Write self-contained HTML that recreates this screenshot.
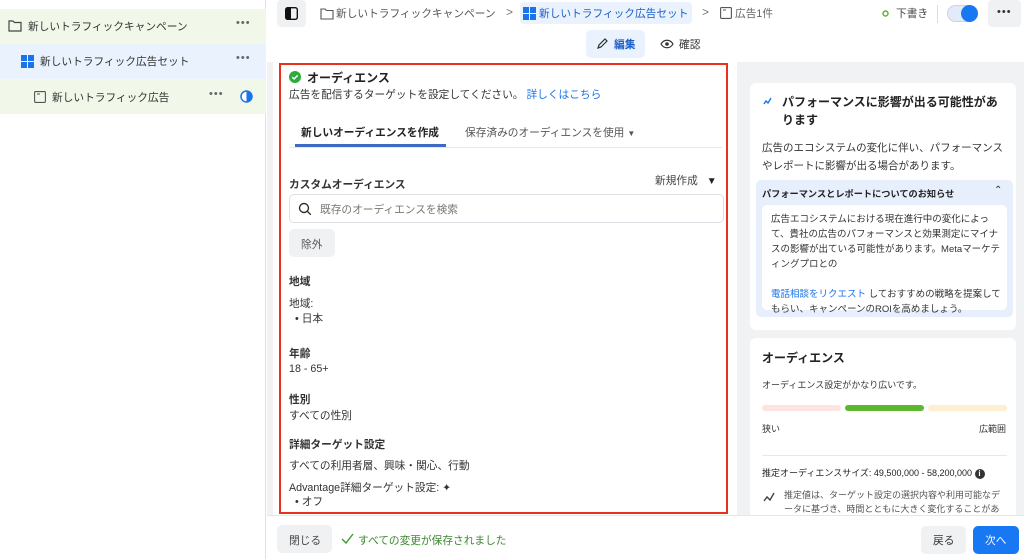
<!DOCTYPE html>
<html><head><meta charset="utf-8"><style>
*{box-sizing:border-box;margin:0;padding:0}
body{width:1024px;height:559px;overflow:hidden;position:relative;background:#fff;font-family:"Liberation Sans","Noto Sans CJK JP",sans-serif;color:#1c2b33;font-size:10.7px}
.a{position:absolute;white-space:nowrap}
.side{left:0;top:0;width:266px;height:559px;background:#fff;border-right:1px solid #dde1e5}
.row{left:0;width:266px;height:35px;color:#333}
.dots{color:#666;font-size:11px;letter-spacing:1px}
.gray{left:267px;top:62px;width:757px;height:453px;background:#f1f2f4}
.panel{left:273px;top:62px;width:464px;height:453px;background:#fff}
.red{left:279px;top:63px;width:449px;height:451px;border:2px solid #e8321e}
.card{background:#fff;border-radius:6px}
.b{font-weight:bold}
</style></head><body>
<div class="a side"></div>
<div class="a row" style="top:9px;background:#f1f8e9"></div>
<div class="a row" style="top:44px;background:#eaf2fd"></div>
<div class="a row" style="top:79px;background:#f1f8e9"></div>
<svg class="a" style="left:8px;top:19px" width="14" height="13" viewBox="0 0 14 13"><path d="M1 2h4l1.5 1.5H13V12H1z" fill="none" stroke="#444" stroke-width="1.2"/></svg>
<div class="a" style="left:28px;top:19px;color:#333">新しいトラフィックキャンペーン</div>
<div class="a dots" style="left:236px;top:17px">•••</div>
<svg class="a" style="left:21px;top:55px" width="13" height="13"><rect x="0" y="0" width="6" height="6" fill="#1a73e8"/><rect x="7" y="0" width="6" height="6" fill="#1a73e8"/><rect x="0" y="7" width="6" height="6" fill="#1a73e8"/><rect x="7" y="7" width="6" height="6" fill="#1a73e8"/></svg>
<div class="a" style="left:40px;top:54px;color:#333">新しいトラフィック広告セット</div>
<div class="a dots" style="left:236px;top:52px">•••</div>
<svg class="a" style="left:34px;top:91px" width="12" height="12"><rect x=".6" y=".6" width="10.8" height="10.8" rx="1" fill="none" stroke="#555" stroke-width="1.1"/><path d="M3 3h3" stroke="#555"/></svg>
<div class="a" style="left:52px;top:90px;color:#333">新しいトラフィック広告</div>
<div class="a dots" style="left:209px;top:88px">•••</div>
<svg class="a" style="left:240px;top:90px" width="13" height="13"><circle cx="6.5" cy="6.5" r="5.5" fill="#fff" stroke="#1a73e8" stroke-width="1.5"/><path d="M6.5 1a5.5 5.5 0 0 1 0 11z" fill="#1a73e8"/></svg>

<!-- header -->
<div class="a" style="left:277px;top:0;width:29px;height:27px;background:#f0f1f3;border-radius:4px"></div>
<svg class="a" style="left:285px;top:7px" width="13" height="13"><rect x=".7" y=".7" width="11.6" height="11.6" rx="2" fill="none" stroke="#111" stroke-width="1.4"/><rect x="1" y="1" width="5" height="11" fill="#111"/></svg>
<svg class="a" style="left:320px;top:7px" width="14" height="13"><path d="M1 2h4l1.5 1.5H13V12H1z" fill="none" stroke="#555" stroke-width="1.1"/></svg>
<div class="a" style="left:336px;top:6px;color:#555">新しいトラフィックキャンペーン</div>
<div class="a" style="left:506px;top:5px;color:#777;font-size:12px">&gt;</div>
<div class="a" style="left:520px;top:2px;width:172px;height:22px;background:#eaf2fd;border-radius:4px"></div>
<svg class="a" style="left:523px;top:7px" width="13" height="13"><rect x="0" y="0" width="6" height="6" fill="#1a73e8"/><rect x="7" y="0" width="6" height="6" fill="#1a73e8"/><rect x="0" y="7" width="6" height="6" fill="#1a73e8"/><rect x="7" y="7" width="6" height="6" fill="#1a73e8"/></svg>
<div class="a" style="left:539px;top:6px;color:#1a5fc7">新しいトラフィック広告セット</div>
<div class="a" style="left:702px;top:5px;color:#777;font-size:12px">&gt;</div>
<svg class="a" style="left:720px;top:7px" width="12" height="12"><rect x=".6" y=".6" width="10.8" height="10.8" rx="1" fill="none" stroke="#555" stroke-width="1.1"/><path d="M3 3h3" stroke="#555"/></svg>
<div class="a" style="left:735px;top:6px;color:#666">広告1件</div>
<svg class="a" style="left:882px;top:10px" width="7" height="7"><circle cx="3.5" cy="3.5" r="2.5" fill="none" stroke="#5cb82c" stroke-width="1.5"/></svg>
<div class="a" style="left:896px;top:6px;color:#444">下書き</div>
<div class="a" style="left:937px;top:5px;width:1px;height:18px;background:#ddd"></div>
<div class="a" style="left:947px;top:5px;width:30px;height:17px;border-radius:9px;background:#e3ebf8;border:1px solid #c8d3e6"></div>
<div class="a" style="left:961px;top:5px;width:17px;height:17px;border-radius:50%;background:#1877f2"></div>
<div class="a" style="left:988px;top:0;width:33px;height:27px;background:#f0f1f3;border-radius:4px"></div>
<div class="a dots" style="left:997px;top:6px;color:#333">•••</div>
<div class="a" style="left:586px;top:30px;width:59px;height:28px;background:#eaf2fd;border-radius:5px"></div>
<svg class="a" style="left:596px;top:37px" width="13" height="13"><path d="M2 11l1-3 6-6 2 2-6 6z" fill="none" stroke="#333" stroke-width="1.2"/></svg>
<div class="a b" style="left:614px;top:37px;color:#1a5fc7">編集</div>
<svg class="a" style="left:660px;top:39px" width="14" height="10"><path d="M1 5c3-5 9-5 12 0c-3 5-9 5-12 0z" fill="none" stroke="#333" stroke-width="1.2"/><circle cx="7" cy="5" r="1.8" fill="#333"/></svg>
<div class="a" style="left:679px;top:37px;color:#333">確認</div>

<div class="a gray"></div>
<div class="a panel"></div>
<div class="a red"></div>
<svg class="a" style="left:289px;top:71px" width="12" height="12"><circle cx="6" cy="6" r="6" fill="#2eaa3f"/><path d="M3.3 6.2l1.8 1.8 3.6-3.6" stroke="#fff" stroke-width="1.5" fill="none"/></svg>
<div class="a b" style="left:307px;top:69px;font-size:12px;color:#222">オーディエンス</div>
<div class="a" style="left:289px;top:87px;color:#333">広告を配信するターゲットを設定してください。 <span style="color:#1a73e8">詳しくはこちら</span></div>
<div class="a b" style="left:301px;top:125px;color:#222">新しいオーディエンスを作成</div>
<div class="a" style="left:295px;top:144px;width:151px;height:3px;background:#3d6bc4"></div>
<div class="a" style="left:289px;top:147px;width:433px;height:1px;background:#e6e8eb"></div>
<div class="a" style="left:465px;top:125px;color:#555">保存済みのオーディエンスを使用 <span style="font-size:8px">▼</span></div>
<div class="a b" style="left:289px;top:177px;color:#333">カスタムオーディエンス</div>
<div class="a" style="left:655px;top:173px;color:#444">新規作成 <span style="font-size:10px;margin-left:6px;color:#222">▼</span></div>
<div class="a" style="left:289px;top:194px;width:435px;height:29px;border:1px solid #dcdfe3;border-radius:5px"></div>
<svg class="a" style="left:298px;top:202px" width="14" height="14"><circle cx="6" cy="6" r="4.5" fill="none" stroke="#333" stroke-width="1.4"/><path d="M9.3 9.3l3.5 3.5" stroke="#333" stroke-width="1.4"/></svg>
<div class="a" style="left:320px;top:202px;color:#777">既存のオーディエンスを検索</div>
<div class="a" style="left:289px;top:229px;width:46px;height:28px;background:#f0f1f3;border-radius:5px"></div>
<div class="a" style="left:301px;top:237px;color:#555">除外</div>
<div class="a b" style="left:289px;top:274px;color:#333">地域</div>
<div class="a" style="left:289px;top:296px;color:#333">地域:</div>
<div class="a" style="left:295px;top:311px;color:#333">• 日本</div>
<div class="a b" style="left:289px;top:346px;color:#333">年齢</div>
<div class="a" style="left:289px;top:363px;color:#333">18 - 65+</div>
<div class="a b" style="left:289px;top:392px;color:#333">性別</div>
<div class="a" style="left:289px;top:408px;color:#333">すべての性別</div>
<div class="a b" style="left:289px;top:437px;color:#333">詳細ターゲット設定</div>
<div class="a" style="left:289px;top:458px;color:#333">すべての利用者層、興味・関心、行動</div>
<div class="a" style="left:289px;top:480px;color:#333">Advantage詳細ターゲット設定: ✦</div>
<div class="a" style="left:295px;top:494px;color:#333">• オフ</div>

<!-- right cards -->
<div class="a card" style="left:750px;top:83px;width:266px;height:247px"></div>
<svg class="a" style="left:763px;top:96px" width="10" height="10"><path d="M1 8l2-3 2 2 3-5" fill="none" stroke="#1a73e8" stroke-width="1.4"/></svg>
<div class="a b" style="left:782px;top:93px;font-size:12px;line-height:18px;color:#222;white-space:normal;width:226px">パフォーマンスに影響が出る可能性があります</div>
<div class="a" style="left:762px;top:139px;font-size:10.5px;line-height:18px;color:#333;white-space:normal;width:248px">広告のエコシステムの変化に伴い、パフォーマンスやレポートに影響が出る場合があります。</div>
<div class="a" style="left:756px;top:180px;width:257px;height:137px;background:#e7effc;border-radius:5px"></div>
<div class="a b" style="left:762px;top:186px;font-size:9.2px;color:#222">パフォーマンスとレポートについてのお知らせ</div>
<div class="a" style="left:994px;top:185px;font-size:10px;color:#333">⌃</div>
<div class="a" style="left:762px;top:205px;width:245px;height:105px;background:#fff;border-radius:5px"></div>
<div class="a" style="left:771px;top:212px;font-size:9.5px;line-height:15px;color:#333;white-space:normal;width:232px">広告エコシステムにおける現在進行中の変化によって、貴社の広告のパフォーマンスと効果測定にマイナスの影響が出ている可能性があります。Metaマーケティングプロとの<br><br><span style="color:#1a73e8">電話相談をリクエスト</span> しておすすめの戦略を提案してもらい、キャンペーンのROIを高めましょう。</div>

<div class="a card" style="left:750px;top:338px;width:266px;height:177px;border-radius:6px 6px 0 0"></div>
<div class="a b" style="left:762px;top:349px;font-size:12px;color:#222">オーディエンス</div>
<div class="a" style="left:762px;top:378px;font-size:9px;color:#333">オーディエンス設定がかなり広いです。</div>
<div class="a" style="left:762px;top:405px;width:79px;height:6px;border-radius:3px;background:#fde4e1"></div>
<div class="a" style="left:845px;top:405px;width:79px;height:6px;border-radius:3px;background:#5cb82c"></div>
<div class="a" style="left:928px;top:405px;width:79px;height:6px;border-radius:3px;background:#fdefcf"></div>
<div class="a" style="left:762px;top:422px;font-size:9px;color:#333">狭い</div>
<div class="a" style="left:979px;top:422px;font-size:9px;color:#333">広範囲</div>
<div class="a" style="left:762px;top:455px;width:245px;height:1px;background:#e6e8eb"></div>
<div class="a" style="left:762px;top:466px;font-size:9px;color:#222">推定オーディエンスサイズ: 49,500,000 - 58,200,000 <span style="display:inline-block;width:10px;height:10px;border-radius:50%;background:#333;color:#fff;font-size:8px;text-align:center;line-height:10px;font-weight:bold">i</span></div>
<svg class="a" style="left:763px;top:491px" width="14" height="12"><path d="M1 10l3-4 3 3 4-7" fill="none" stroke="#444" stroke-width="1.4"/></svg>
<div class="a" style="left:784px;top:488px;font-size:9px;line-height:14px;color:#555;white-space:normal;width:224px;height:27px;overflow:hidden">推定値は、ターゲット設定の選択内容や利用可能なデータに基づき、時間とともに大きく変化することがあります。</div>

<!-- bottom -->
<div class="a" style="left:267px;top:515px;width:757px;height:44px;background:#fff;border-top:1px solid #e4e6e9"></div>
<div class="a" style="left:277px;top:525px;width:55px;height:28px;background:#f0f1f3;border-radius:5px"></div>
<div class="a" style="left:289px;top:533px;color:#444">閉じる</div>
<svg class="a" style="left:341px;top:533px" width="13" height="11"><path d="M1 6l4 4 7-9" fill="none" stroke="#3a9c2e" stroke-width="1.4"/></svg>
<div class="a" style="left:358px;top:533px;color:#3a8a2e">すべての変更が保存されました</div>
<div class="a" style="left:921px;top:526px;width:45px;height:28px;background:#f0f1f3;border-radius:5px"></div>
<div class="a" style="left:933px;top:533px;color:#333">戻る</div>
<div class="a" style="left:973px;top:526px;width:46px;height:28px;background:#1877f2;border-radius:5px"></div>
<div class="a" style="left:985px;top:533px;color:#fff">次へ</div>
</body></html>
